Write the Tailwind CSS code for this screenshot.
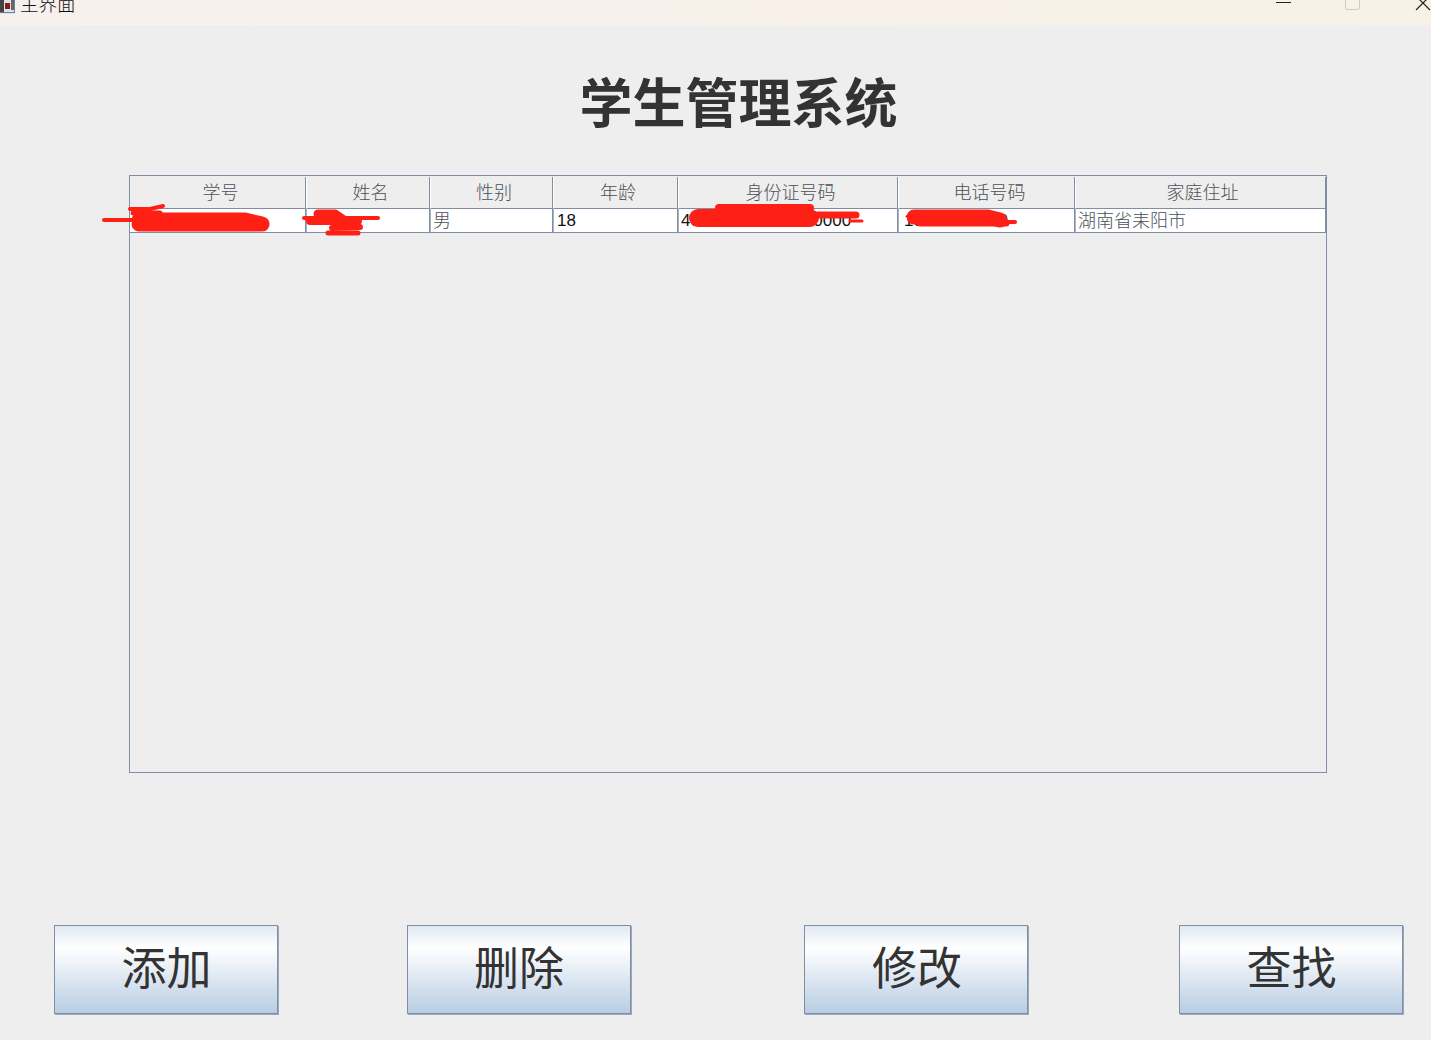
<!DOCTYPE html>
<html lang="zh">
<head>
<meta charset="utf-8">
<title>主界面</title>
<script src="https://cdn.jsdelivr.net/npm/@tailwindcss/browser@4"></script>
</head>
<body class="bg-[#eeeeee] overflow-hidden font-['Liberation_Serif','Noto_Sans_CJK_SC',serif]">
<div class="w-[1431px] h-[1040px] relative overflow-hidden">

    <!-- title bar -->
    <div class="h-[25px] bg-gradient-to-r from-[#f8f0ee] to-[#f8f1e6] flex items-start overflow-hidden relative">
        <svg class="w-[15px] h-[14px] shrink-0" viewBox="0 0 15 14">
            <rect width="15" height="14" fill="#dfe3e8"/>
            <rect x="0" y="0" width="4" height="12" fill="#444"/>
            <rect x="5" y="3" width="5" height="6" fill="#8a1c1c"/>
            <rect x="11" y="0" width="3" height="10" fill="#666"/>
            <rect x="0" y="12" width="15" height="1" fill="#6d8094"/>
            <rect x="14" y="0" width="1" height="13" fill="#6d8094"/>
        </svg>
        <span class="ml-[5px] -mt-[9px] text-[18.5px] leading-[24px] text-[#111] font-['Noto_Sans_CJK_SC',sans-serif] font-light">主界面</span>
        <div class="absolute left-[1276px] top-[2px] w-[15px] h-px bg-[#222]"></div>
        <div class="absolute left-[1345px] -top-[4px] w-[15px] h-[14px] border border-[#cfcbc4] rounded-[2px]"></div>
        <svg class="absolute left-[1415px] -top-[5px] w-[16px] h-[16px]" viewBox="0 0 16 16" fill="none" stroke="#222" stroke-width="1.2">
            <path d="M1 1 L15 15 M15 1 L1 15"/>
        </svg>
    </div>

    <!-- heading -->
    <div class="h-[150px] pl-[46px] text-center">
        <h1 class="pt-[43px] text-[53px] leading-[64px] font-bold text-[#333333] font-['Noto_Sans_CJK_SC',sans-serif]">学生管理系统</h1>
    </div>

    <!-- table -->
    <div class="ml-[129px] w-[1198px] h-[598px] border border-[#7f8ea3]">
        <div class="flex h-[33px] pt-px text-[18px] leading-[28px] text-center font-['Noto_Sans_CJK_SC',sans-serif] font-light text-[#4c5158]">
            <div class="w-[176px] pl-[6px] border-r border-b border-[#7f8ea3]">学号</div>
            <div class="w-[124px] pl-[5px] border-l border-l-white border-r border-b border-[#7f8ea3]">姓名</div>
            <div class="w-[123px] pl-[5px] border-l border-l-white border-r border-b border-[#7f8ea3]">性别</div>
            <div class="w-[125px] pl-[5px] border-l border-l-white border-r border-b border-[#7f8ea3]">年龄</div>
            <div class="w-[220px] pl-[5px] border-l border-l-white border-r border-b border-[#7f8ea3]">身份证号码</div>
            <div class="w-[177px] pl-[6px] border-l border-l-white border-r border-b border-[#7f8ea3]">电话号码</div>
            <div class="w-[251px] pl-[4px] border-l border-l-white border-r border-b border-[#7f8ea3]">家庭住址</div>
        </div>
        <div class="flex h-[24px] bg-white text-[18px] leading-[20px] font-['Noto_Sans_CJK_SC',sans-serif] font-light text-[#4c5158]">
            <div class="w-[176px] px-[3px] border-r border-b border-[#7f8ea3]"></div>
            <div class="w-[124px] px-[3px] border-l border-l-[#a9b4c2] border-r border-b border-[#7f8ea3]"></div>
            <div class="w-[123px] px-[2px] border-l border-l-[#a9b4c2] border-r border-b border-[#7f8ea3]">男</div>
            <div class="w-[125px] px-[3px] border-l border-l-[#a9b4c2] border-r border-b border-[#7f8ea3] text-[17px] leading-[23px] text-[#111] font-normal font-['Liberation_Sans',sans-serif]">18</div>
            <div class="w-[220px] px-[2px] border-l border-l-[#a9b4c2] border-r border-b border-[#7f8ea3] text-[17px] leading-[23px] text-[#111] font-normal font-['Liberation_Sans',sans-serif]">400000000000000000</div>
            <div class="w-[177px] px-[5px] border-l border-l-[#a9b4c2] border-r border-b border-[#7f8ea3] text-[17px] leading-[23px] text-[#111] font-normal font-['Liberation_Sans',sans-serif]">10000000000</div>
            <div class="w-[251px] px-[2px] border-l border-l-[#a9b4c2] border-r border-b border-[#7f8ea3]">湖南省耒阳市</div>
        </div>
    </div>

    <!-- buttons -->
    <div class="flex pl-[54px] mt-[152px] text-[45px] text-[#333] font-['Noto_Sans_CJK_SC',sans-serif] font-normal">
        <button class="w-[224px] h-[89px] pb-[8px] pl-[1px] border border-[#7f8ea3] shadow-[1px_1px_0_#9aa9bb] bg-gradient-to-b from-[#e1e9f3] via-white via-25% to-[#b8cde3]">添加</button>
        <button class="w-[224px] h-[89px] pb-[8px] ml-[129px] border border-[#7f8ea3] shadow-[1px_1px_0_#9aa9bb] bg-gradient-to-b from-[#e1e9f3] via-white via-25% to-[#b8cde3]">删除</button>
        <button class="w-[224px] h-[89px] pb-[8px] pl-[2px] ml-[173px] border border-[#7f8ea3] shadow-[1px_1px_0_#9aa9bb] bg-gradient-to-b from-[#e1e9f3] via-white via-25% to-[#b8cde3]">修改</button>
        <button class="w-[224px] h-[89px] pb-[8px] pl-[1px] ml-[151px] border border-[#7f8ea3] shadow-[1px_1px_0_#9aa9bb] bg-gradient-to-b from-[#e1e9f3] via-white via-25% to-[#b8cde3]">查找</button>
    </div>

    <!-- red scribbles painted over the private cells -->
    <svg class="absolute left-0 top-0 w-[1431px] h-[260px] pointer-events-none" viewBox="0 0 1431 260" fill="none" stroke="#ff2015" stroke-linecap="round" stroke-linejoin="round">
        <path stroke-width="4" d="M104 220 H140"/>
        <path stroke-width="4" d="M130 209 H150 L163 206"/>
        <path stroke-width="15" d="M139 220 H245 L262 224 L245 224 H139"/>
        <path stroke-width="5" d="M133 213 H160"/>
        <path stroke-width="9" d="M318 214 H335 L345 221 H355"/>
        <path stroke-width="4" d="M304 218 H378"/>
        <path stroke-width="8" d="M310 221 H358"/>
        <path stroke-width="6" d="M332 228 L360 227"/>
        <path stroke-width="5" d="M328 233 H358"/>
        <path stroke-width="8" d="M719 208 H810"/>
        <path stroke-width="18" d="M698 218 H810"/>
        <path stroke-width="7" d="M812 215 H856"/>
        <path stroke-width="3" d="M850 221 H862"/>
        <path stroke-width="15" d="M914 217 H988 L1000 220"/>
        <path stroke-width="7" d="M920 223 H1006"/>
        <path stroke-width="4" d="M1004 222 H1015"/>
    </svg>
</div>
</body>
</html>
